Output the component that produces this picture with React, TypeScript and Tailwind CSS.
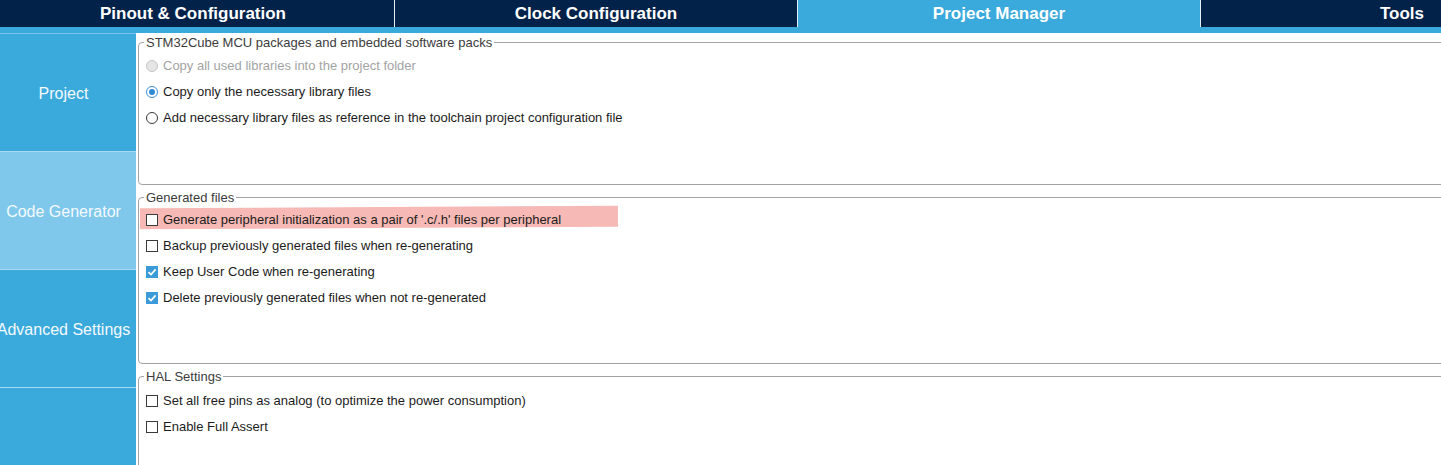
import React from 'react';

const tabs = [
  { label: 'Pinout & Configuration', active: false },
  { label: 'Clock Configuration', active: false },
  { label: 'Project Manager', active: true },
  { label: 'Tools', active: false },
];

const sideItems = [
  { label: 'Project', active: false },
  { label: 'Code Generator', active: true },
  { label: 'Advanced Settings', active: false },
];

function Radio({ state }: { state: 'disabled' | 'on' | 'off' }) {
  if (state === 'disabled') {
    return <span className="w-3 h-3 rounded-full border border-[#c6c6c6] bg-[#e6e6e6] shrink-0" />;
  }
  if (state === 'on') {
    return (
      <span className="w-3 h-3 rounded-full border border-[#3b8fd4] bg-white shrink-0 flex items-center justify-center">
        <span className="w-[6px] h-[6px] rounded-full bg-[#2f89d4]" />
      </span>
    );
  }
  return <span className="w-3 h-3 rounded-full border border-[#3a3a3a] bg-white shrink-0" />;
}

function Check({ checked }: { checked: boolean }) {
  if (checked) {
    return (
      <span className="w-3 h-3 bg-[#3b9bd8] shrink-0 flex items-center justify-center">
        <svg width="10" height="10" viewBox="0 0 10 10">
          <polyline points="1.5,5.2 4,7.6 8.6,2.4" fill="none" stroke="white" strokeWidth="1.7" />
        </svg>
      </span>
    );
  }
  return <span className="w-3 h-3 border border-[#3a3a3a] bg-white shrink-0" />;
}

function Row({ children, label, disabled }: { children: React.ReactNode; label: string; disabled?: boolean }) {
  return (
    <div className="h-[26px] flex items-center pl-[7px] gap-[5px]">
      {children}
      <span className={disabled ? 'text-[#a3a3a3]' : 'text-[#1c1c1c]'}>{label}</span>
    </div>
  );
}

function Group({ title, className, children }: { title: string; className: string; children: React.ReactNode }) {
  return (
    <fieldset className={`border border-[#a3a3a3] rounded-[4px] -mr-6 ${className}`}>
      <legend className="ml-[5px] px-[2px] text-[#3c3c3c] leading-[15px]">{title}</legend>
      {children}
    </fieldset>
  );
}

export default function App() {
  return (
    <div className="w-[1441px] h-[465px] overflow-hidden bg-white font-['Liberation_Sans',Arial,sans-serif] text-[13px]">
      <div className="h-[27px] bg-[#03224a] flex -ml-[8px]">
        {tabs.map((t) => (
          <div
            key={t.label}
            className={`w-[403px] shrink-0 border-r border-[#e8eef5] flex items-center justify-center text-[17px] font-bold text-white ${
              t.active ? 'bg-[#3aa9dc]' : ''
            }`}
          >
            {t.label}
          </div>
        ))}
      </div>
      <div className="h-[6px] bg-[#3aa9dc]" />
      <div className="flex h-[432px]">
        <div className="w-[136px] shrink-0 bg-[#3aa9dc] border-t border-[#79c4e8] flex flex-col">
          {sideItems.map((s) => (
            <div
              key={s.label}
              className={`h-[118px] pr-[9px] pt-[2px] border-b border-[#a9daf1] flex items-center justify-center whitespace-nowrap text-[16px] text-[#f4faff] ${
                s.active ? 'bg-[#7fc8ec]' : ''
              }`}
            >
              {s.label}
            </div>
          ))}
          <div className="flex-1" />
        </div>
        <div className="flex-1 overflow-hidden pl-[2px] pt-[2px]">
          <Group title="STM32Cube MCU packages and embedded software packs" className="h-[150px]">
            <div className="pt-[3px]">
              <Row label="Copy all used libraries into the project folder" disabled>
                <Radio state="disabled" />
              </Row>
              <Row label="Copy only the necessary library files">
                <Radio state="on" />
              </Row>
              <Row label="Add necessary library files as reference in the toolchain project configuration file">
                <Radio state="off" />
              </Row>
            </div>
          </Group>
          <Group title="Generated files" className="h-[174px] mt-[5px]">
            <div className="pt-[2px]">
              <div className="relative">
                <span className="absolute left-[1px] top-[0px] w-[478px] h-[21px] bg-[#f6b9b5] -rotate-[0.3deg]" />
                <div className="relative">
                  <Row label="Generate peripheral initialization as a pair of '.c/.h' files per peripheral">
                    <Check checked={false} />
                  </Row>
                </div>
              </div>
              <Row label="Backup previously generated files when re-generating">
                <Check checked={false} />
              </Row>
              <Row label="Keep User Code when re-generating">
                <Check checked />
              </Row>
              <Row label="Delete previously generated files when not re-generated">
                <Check checked />
              </Row>
            </div>
          </Group>
          <Group title="HAL Settings" className="h-[140px] mt-[5px]">
            <div className="pt-[4px]">
              <Row label="Set all free pins as analog (to optimize the power consumption)">
                <Check checked={false} />
              </Row>
              <Row label="Enable Full Assert">
                <Check checked={false} />
              </Row>
            </div>
          </Group>
        </div>
      </div>
    </div>
  );
}
